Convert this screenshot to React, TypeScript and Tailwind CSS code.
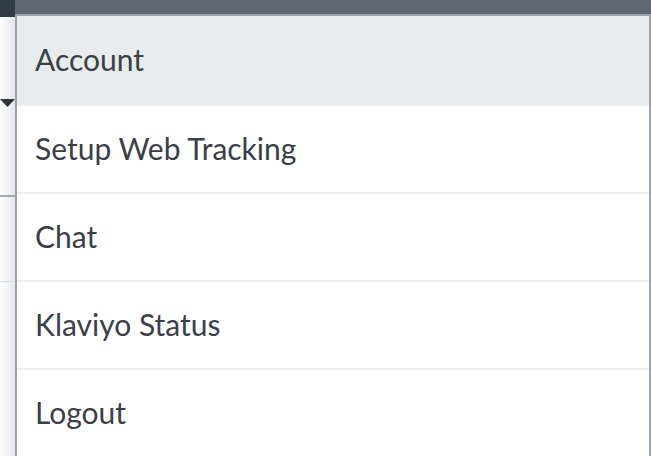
import React from "react"

const items = ["Account", "Setup Web Tracking", "Chat", "Klaviyo Status", "Logout"]

export default function App() {
  return (
    <div className="w-[651px] h-[456px] overflow-hidden bg-white flex font-['Lato',sans-serif]">
      {/* columna izquierda: fondo de la página detrás del menú */}
      <div className="w-[15px] shrink-0 flex flex-col">
        <div className="h-[17px] bg-[#323c46]" />
        <div className="flex-1 flex flex-col bg-gradient-to-r from-white to-[#e6e7ea]">
          <div className="h-[82px]" />
          <svg width="15" height="9" viewBox="0 0 15 9" className="block">
            <path d="M0 0 H15 L7.5 8 Z" fill="#2b323a" />
          </svg>
          <div className="h-[87px]" />
          <div className="h-[2px] bg-[#a5aab0]" />
          <div className="h-[84px]" />
          <div className="h-px bg-[#d9dce0]" />
        </div>
      </div>

      <div className="flex-1 flex flex-col">
        <div className="h-[15px] bg-[#5e6974]" />
        <div className="flex-1 border-t-2 border-l-2 border-r-2 border-[#9da3aa] bg-white flex flex-col">
          {items.map((label, i) => (
            <div
              key={label}
              className={`h-[88px] shrink-0 flex items-center pl-[18px] text-[30px] text-[#3a4047] ${
                i === 0 ? "h-[87px] bg-[#e9eced]" : "border-t-2 border-[#eceef0]"
              }`}
            >
              <span className="-mt-[2px]">{label}</span>
            </div>
          ))}
        </div>
      </div>
    </div>
  )
}
